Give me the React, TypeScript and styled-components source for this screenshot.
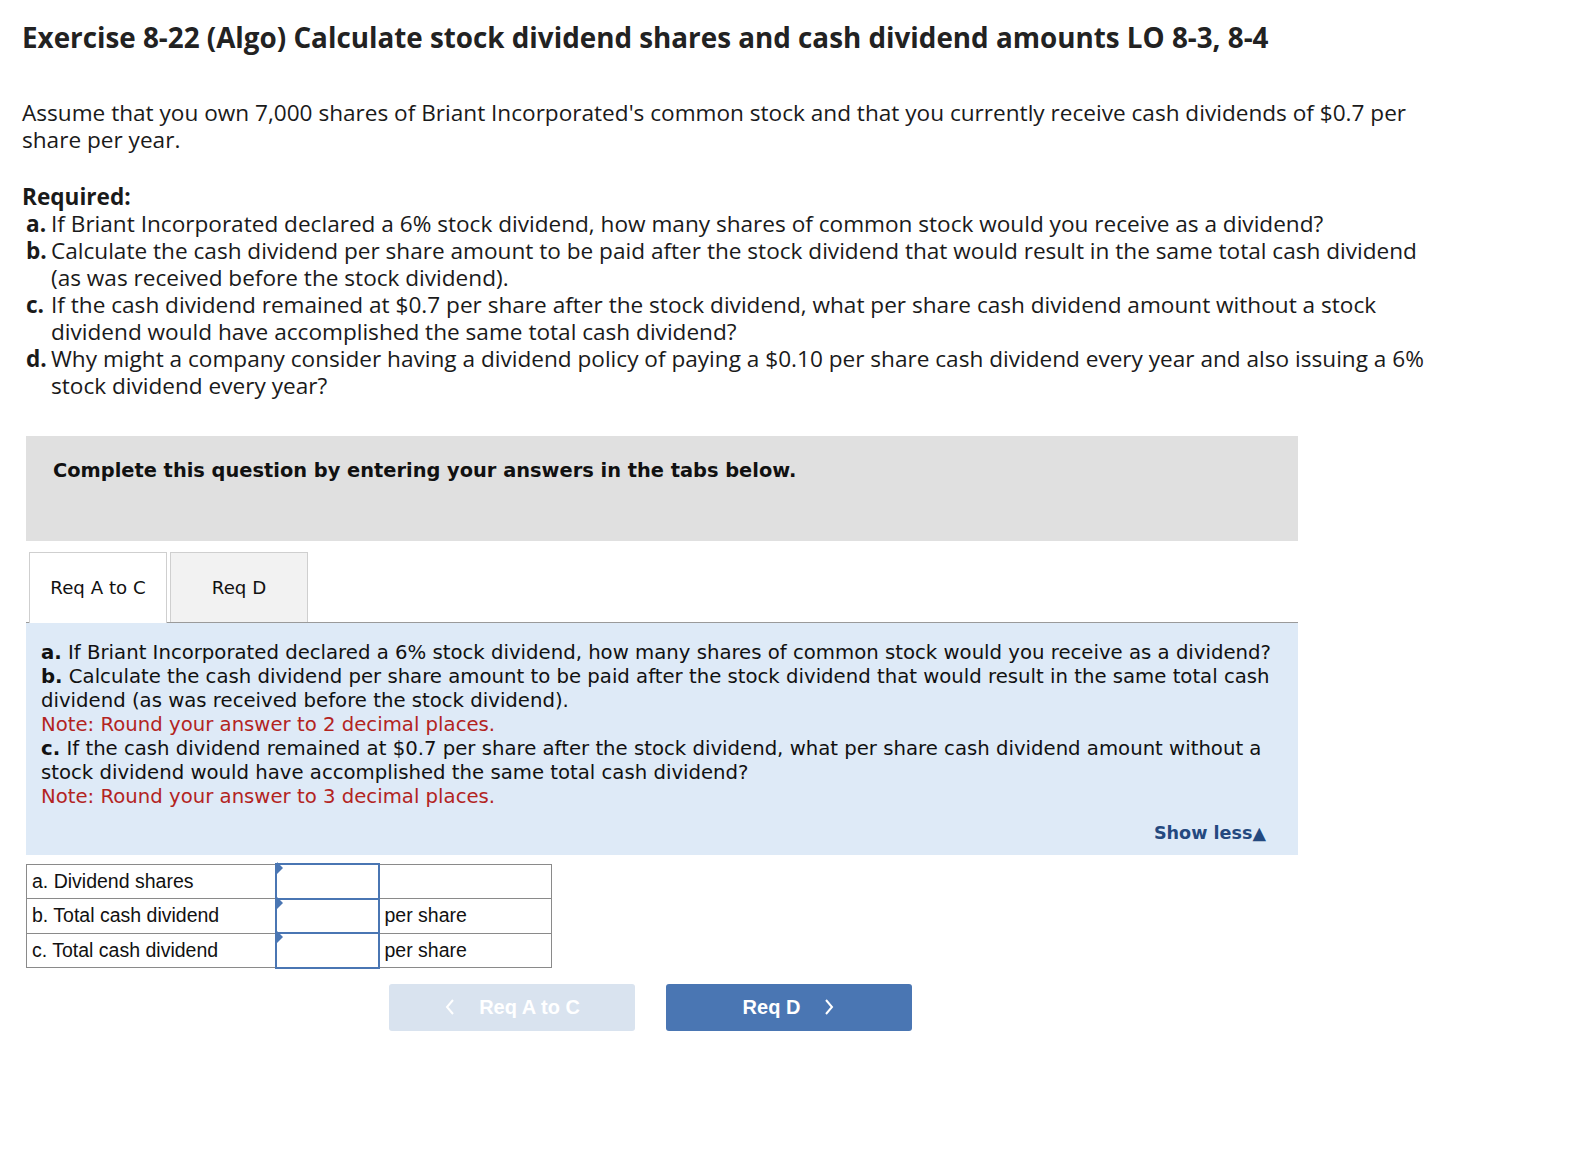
import React from "react";
import styled, { createGlobalStyle } from "styled-components";

const Global = createGlobalStyle`
  html, body { margin: 0; padding: 0; background: #fff; }
  body { font-family: "Open Sans", Lato, sans-serif; color: #1a1a1a; }
`;

const Page = styled.div`
  padding: 18px 0 0 22px;
  width: 1440px;
`;

const Title = styled.h1`
  margin: 0;
  font-family: "Open Sans", sans-serif;
  font-weight: 700;
  font-size: 27.8px;
  line-height: 38px;
  color: #222;
`;

const Para = styled.p`
  margin: 43px 0 0 0;
  font-size: 22.6px;
  line-height: 27px;
  width: 1400px;
`;

const Required = styled.div`
  margin-top: 30px;
  font-size: 22.6px;
  line-height: 27px;
`;

const ReqHead = styled.div`
  font-weight: 700;
`;

const ReqItem = styled.div`
  display: flex;
  padding-left: 4px;
  width: 1408px;
`;

const ReqLabel = styled.span`
  font-weight: 700;
  flex: 0 0 25px;
`;

const ReqText = styled.span`
  flex: 1;
`;

const Instruct = styled.div`
  margin-top: 37px;
  margin-left: 4px;
  width: 1272px;
  height: 105px;
  box-sizing: border-box;
  background: #e0e0e0;
  padding: 23px 27px;
  font-family: Verdana, "DejaVu Sans", sans-serif;
  font-weight: 700;
  font-size: 19.4px;
  line-height: 24px;
  color: #111;
`;

const Tabs = styled.div`
  margin-top: 11px;
  margin-left: 4px;
  width: 1272px;
  display: flex;
  gap: 3px;
  padding-left: 3px;
  box-sizing: border-box;
  border-bottom: 1px solid #9a9a9a;
`;

const Tab = styled.div<{ $active?: boolean }>`
  width: 138px;
  box-sizing: border-box;
  display: flex;
  align-items: center;
  justify-content: center;
  border: 1px solid #cfcfcf;
  border-bottom: none;
  background: ${(p) => (p.$active ? "#fff" : "#f2f2f2")};
  margin-bottom: ${(p) => (p.$active ? "-1px" : "0")};
  height: ${(p) => (p.$active ? "71px" : "70px")};
  padding-bottom: ${(p) => (p.$active ? "1px" : "0")};
  font-family: Verdana, "DejaVu Sans", sans-serif;
  font-size: 18.2px;
  color: #111;
`;

const Panel = styled.div`
  margin-left: 4px;
  width: 1272px;
  box-sizing: border-box;
  background: #deeaf7;
  padding: 18px 15px 12px 15px;
  font-family: Verdana, "DejaVu Sans", sans-serif;
  font-size: 19.7px;
  line-height: 24px;
  color: #111;
`;

const Note = styled.div`
  color: #b3241f;
`;

const ShowLess = styled.div`
  margin-top: 14px;
  text-align: right;
  padding-right: 17px;
  font-weight: 700;
  font-size: 17.6px;
  line-height: 20px;
  color: #24497f;
`;

const Table = styled.table`
  margin-top: 8px;
  margin-left: 4px;
  border-collapse: collapse;
  font-family: Arial, "Liberation Sans", sans-serif;
  font-size: 19.5px;
  color: #111;
`;

const Td = styled.td<{ $w: number }>`
  border: 1px solid #8a8a8a;
  width: ${(p) => p.$w}px;
  height: 34.5px;
  padding: 0 5px;
  box-sizing: border-box;
`;

const InputTd = styled.td`
  border: 2px solid #4a76b3;
  width: 103px;
  height: 34.5px;
  box-sizing: border-box;
  padding: 0;
  position: relative;
  background: #fff;
`;

const Marker = styled.span`
  position: absolute;
  left: 0;
  top: 0;
  width: 0;
  height: 0;
  border-top: 6px solid transparent;
  border-bottom: 6px solid transparent;
  border-left: 6px solid #4a76b3;
  transform: translateY(-3px);
`;

const Nav = styled.div`
  margin-top: 15px;
  margin-left: 367px;
  display: flex;
  gap: 31px;
`;

const NavBtn = styled.div<{ $primary?: boolean }>`
  width: 246px;
  height: 47px;
  border-radius: 3px;
  display: flex;
  align-items: center;
  justify-content: center;
  gap: 23px;
  background: ${(p) => (p.$primary ? "#4a76b3" : "#d9e3ef")};
  color: #fff;
  font-family: Arial, "Liberation Sans", sans-serif;
  font-weight: 700;
  font-size: 20px;
`;

const Chevron = ({ dir }: { dir: "left" | "right" }) => (
  <svg width="12" height="18" viewBox="0 0 12 18">
    <path
      d={dir === "left" ? "M9 2 L3 9 L9 16" : "M3 2 L9 9 L3 16"}
      fill="none"
      stroke="#fff"
      strokeWidth="2"
    />
  </svg>
);

const rows = [
  { label: "a. Dividend shares", unit: "" },
  { label: "b. Total cash dividend", unit: "per share" },
  { label: "c. Total cash dividend", unit: "per share" },
];

export default function App() {
  return (
    <>
      <Global />
      <Page>
        <Title>
          Exercise 8-22 (Algo) Calculate stock dividend shares and cash dividend amounts LO 8-3, 8-4
        </Title>
        <Para>
          Assume that you own 7,000 shares of Briant Incorporated's common stock and that you currently
          receive cash dividends of $0.7 per share per year.
        </Para>
        <Required>
          <ReqHead>Required:</ReqHead>
          <ReqItem>
            <ReqLabel>a.</ReqLabel>
            <ReqText>
              If Briant Incorporated declared a 6% stock dividend, how many shares of common stock would you
              receive as a dividend?
            </ReqText>
          </ReqItem>
          <ReqItem>
            <ReqLabel>b.</ReqLabel>
            <ReqText>
              Calculate the cash dividend per share amount to be paid after the stock dividend that would
              result in the same total cash dividend (as was received before the stock dividend).
            </ReqText>
          </ReqItem>
          <ReqItem>
            <ReqLabel>c.</ReqLabel>
            <ReqText>
              If the cash dividend remained at $0.7 per share after the stock dividend, what per share cash
              dividend amount without a stock dividend would have accomplished the same total cash dividend?
            </ReqText>
          </ReqItem>
          <ReqItem>
            <ReqLabel>d.</ReqLabel>
            <ReqText>
              Why might a company consider having a dividend policy of paying a $0.10 per share cash dividend
              every year and also issuing a 6% stock dividend every year?
            </ReqText>
          </ReqItem>
        </Required>

        <Instruct>Complete this question by entering your answers in the tabs below.</Instruct>

        <Tabs>
          <Tab $active>Req A to C</Tab>
          <Tab>Req D</Tab>
        </Tabs>
        <Panel>
          <div>
            <b>a.</b> If Briant Incorporated declared a 6% stock dividend, how many shares of common stock would
            you receive as a dividend?
          </div>
          <div>
            <b>b.</b> Calculate the cash dividend per share amount to be paid after the stock dividend that would
            result in the same total cash dividend (as was received before the stock dividend).
          </div>
          <Note>Note: Round your answer to 2 decimal places.</Note>
          <div>
            <b>c.</b> If the cash dividend remained at $0.7 per share after the stock dividend, what per share
            cash dividend amount without a stock dividend would have accomplished the same total cash dividend?
          </div>
          <Note>Note: Round your answer to 3 decimal places.</Note>
          <ShowLess>Show less▲</ShowLess>
        </Panel>

        <Table>
          <tbody>
            {rows.map((r) => (
              <tr key={r.label}>
                <Td $w={249}>{r.label}</Td>
                <InputTd>
                  <Marker />
                </InputTd>
                <Td $w={173}>{r.unit}</Td>
              </tr>
            ))}
          </tbody>
        </Table>

        <Nav>
          <NavBtn>
            <Chevron dir="left" />
            <span>Req A to C</span>
          </NavBtn>
          <NavBtn $primary>
            <span>Req D</span>
            <Chevron dir="right" />
          </NavBtn>
        </Nav>
      </Page>
    </>
  );
}
